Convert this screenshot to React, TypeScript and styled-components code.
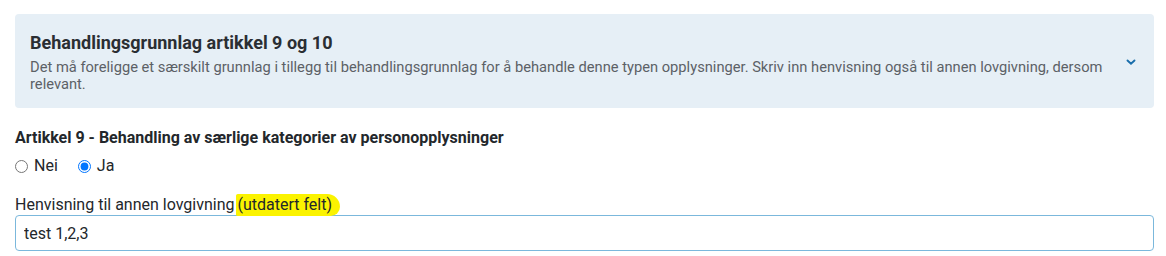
import React, { useState } from "react";
import styled, { createGlobalStyle } from "styled-components";

const GlobalStyle = createGlobalStyle`
  body {
    margin: 0;
    background: #fff;
    font-family: Roboto, "Liberation Sans", Arial, sans-serif;
    color: #23272b;
  }
`;

const Page = styled.div`
  padding: 14px 12px 0 15px;
`;

const Panel = styled.div`
  display: flex;
  align-items: center;
  background: #e6eff6;
  border-radius: 4px;
  padding: 18px 12px 15px 15px;
`;

const PanelText = styled.div`
  flex: 1;
  padding-right: 14px;
`;

const PanelTitle = styled.div`
  font-size: 18px;
  font-weight: 700;
  line-height: 22px;
  color: #2a2e33;
  margin-bottom: 5px;
`;

const PanelDesc = styled.div`
  font-size: 14.7px;
  line-height: 17px;
  color: #5c6166;
  font-weight: 400;
`;

const Chevron = styled.button`
  border: 0;
  background: none;
  padding: 0;
  margin-right: 6px;
  display: flex;
  color: #1a6eab;
  cursor: pointer;
`;

const Section = styled.div`
  padding-top: 20px;
`;

const GroupLabel = styled.div`
  font-size: 16px;
  font-weight: 700;
  line-height: 19px;
  color: #23272b;
`;

const RadioRow = styled.div`
  display: flex;
  gap: 20px;
  margin-top: 10px;
`;

const RadioLabel = styled.label`
  display: flex;
  align-items: center;
  font-size: 16px;
  line-height: 18px;
  color: #23272b;
  input {
    margin: 0 6px 0 0;
    width: 13px;
    height: 13px;
  }
`;

const FieldLabel = styled.label`
  display: block;
  margin-top: 20px;
  font-size: 16px;
  line-height: 19px;
  color: #23272b;
`;

const Highlight = styled.span`
  background: #fbf300;
  padding: 1px 8px 2px 1px;
  border-radius: 2px 14px 10px 2px;
  margin-left: -2px;
`;

const Input = styled.input`
  display: block;
  box-sizing: border-box;
  width: 100%;
  height: 36px;
  margin-top: 1px;
  padding: 0 8px;
  border: 1px solid #7bb8dc;
  border-radius: 4px;
  font-family: Roboto, "Liberation Sans", Arial, sans-serif;
  font-size: 16px;
  color: #23272b;
  outline: none;
`;

export default function App() {
  const [choice, setChoice] = useState("ja");
  const [text, setText] = useState("test 1,2,3");
  return (
    <>
      <GlobalStyle />
      <Page>
        <Panel>
          <PanelText>
            <PanelTitle>Behandlingsgrunnlag artikkel 9 og 10</PanelTitle>
            <PanelDesc>
              Det må foreligge et særskilt grunnlag i tillegg til behandlingsgrunnlag for å behandle denne
              typen opplysninger. Skriv inn henvisning også til annen lovgivning, dersom relevant.
            </PanelDesc>
          </PanelText>
          <Chevron aria-label="Vis mer">
            <svg width="10" height="7" viewBox="0 0 10 7">
              <path d="M1.5 1.5 L5 4.8 L8.5 1.5" fill="none" stroke="currentColor" strokeWidth="1.9" strokeLinecap="round" />
            </svg>
          </Chevron>
        </Panel>
        <Section>
          <GroupLabel>Artikkel 9 - Behandling av særlige kategorier av personopplysninger</GroupLabel>
          <RadioRow>
            <RadioLabel>
              <input type="radio" name="art9" checked={choice === "nei"} onChange={() => setChoice("nei")} />
              Nei
            </RadioLabel>
            <RadioLabel>
              <input type="radio" name="art9" checked={choice === "ja"} onChange={() => setChoice("ja")} />
              Ja
            </RadioLabel>
          </RadioRow>
          <FieldLabel htmlFor="henvisning">
            Henvisning til annen lovgivning <Highlight>(utdatert felt)</Highlight>
          </FieldLabel>
          <Input id="henvisning" value={text} onChange={(e) => setText(e.target.value)} />
        </Section>
      </Page>
    </>
  );
}
